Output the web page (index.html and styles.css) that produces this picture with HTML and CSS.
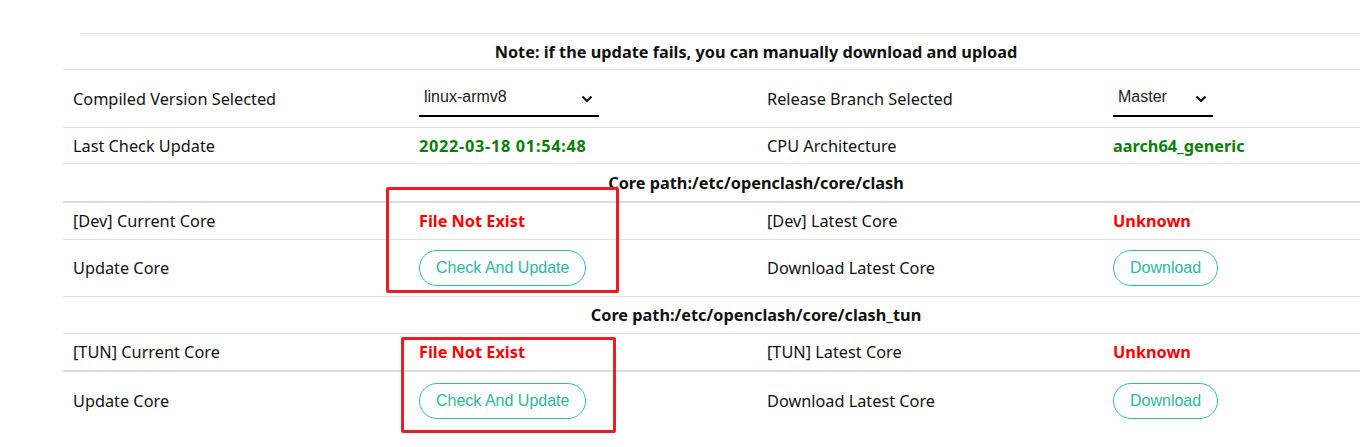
FILE: index.html
```html
<!DOCTYPE html>
<html lang="en">
<head>
<meta charset="utf-8">
<title>Core Update</title>
<link rel="stylesheet" href="styles.css">
</head>
<body>
<div class="page">
  <div class="top-rule"></div>
  <div class="table">
    <div class="row head h36">Note: if the update fails, you can manually download and upload</div>
    <div class="row h58">
      <div class="cell">Compiled Version Selected</div>
      <div class="cell">
        <div class="select w180"><span>linux-armv8</span><svg class="chev" viewBox="0 0 12 8" width="12" height="8"><path d="M1.5 1.5 L6 6 L10.5 1.5" fill="none" stroke="#111" stroke-width="2"/></svg></div>
      </div>
      <div class="cell">Release Branch Selected</div>
      <div class="cell">
        <div class="select w100"><span>Master</span><svg class="chev" viewBox="0 0 12 8" width="12" height="8"><path d="M1.5 1.5 L6 6 L10.5 1.5" fill="none" stroke="#111" stroke-width="2"/></svg></div>
      </div>
    </div>
    <div class="row h36">
      <div class="cell">Last Check Update</div>
      <div class="cell ok num">2022-03-18 01:54:48</div>
      <div class="cell">CPU Architecture</div>
      <div class="cell ok">aarch64_generic</div>
    </div>
    <div class="row head h39 thick">Core path:/etc/openclash/core/clash</div>
    <div class="row h37">
      <div class="cell">[Dev] Current Core</div>
      <div class="cell bad">File Not Exist</div>
      <div class="cell">[Dev] Latest Core</div>
      <div class="cell bad">Unknown</div>
    </div>
    <div class="row h57">
      <div class="cell">Update Core</div>
      <div class="cell"><button class="btn">Check And Update</button></div>
      <div class="cell">Download Latest Core</div>
      <div class="cell"><button class="btn">Download</button></div>
    </div>
    <div class="row head h37">Core path:/etc/openclash/core/clash_tun</div>
    <div class="row h38 thick">
      <div class="cell">[TUN] Current Core</div>
      <div class="cell bad">File Not Exist</div>
      <div class="cell">[TUN] Latest Core</div>
      <div class="cell bad">Unknown</div>
    </div>
    <div class="row h57 noline">
      <div class="cell">Update Core</div>
      <div class="cell"><button class="btn">Check And Update</button></div>
      <div class="cell">Download Latest Core</div>
      <div class="cell"><button class="btn">Download</button></div>
    </div>
  </div>
  <div class="mark mark-1"></div>
  <div class="mark mark-2"></div>
</div>
</body>
</html>
```

FILE: styles.css
```css
html, body {
  margin: 0;
  padding: 0;
  background: #fff;
}
body {
  width: 1360px;
  height: 447px;
  overflow: hidden;
  font-family: "Noto Sans", "Open Sans", sans-serif;
  font-size: 16.3px;
  color: #111;
}
.page {
  position: relative;
  width: 1360px;
  height: 447px;
  overflow: hidden;
}
.top-rule {
  height: 34px;
  margin-left: 80px;
  box-sizing: border-box;
  border-bottom: 1px solid #e2e2e2;
}
.table {
  margin-left: 63px;
  width: 1386px;
}
.row {
  display: grid;
  grid-template-columns: 346px 348px 346px 346px;
  align-items: center;
  box-sizing: border-box;
  border-bottom: 1px solid #e2e2e2;
}
.row.thick { border-bottom-width: 2px; border-bottom-color: #dcdcdc; }
.row.noline { border-bottom: none; }
.row.head {
  display: flex;
  justify-content: center;
  align-items: center;
  font-weight: 700;
}
.h36 { height: 36px; }
.h37 { height: 37px; }
.h38 { height: 38px; }
.h39 { height: 39px; }
.h57 { height: 57px; }
.h58 { height: 58px; }
.cell {
  padding-left: 10px;
  white-space: nowrap;
}
.ok { color: #0a800a; font-weight: 700; }
.num { letter-spacing: 0.7px; }
.bad { color: #ff0000; font-weight: 700; }
.select {
  display: flex;
  align-items: center;
  justify-content: space-between;
  box-sizing: border-box;
  height: 36px;
  padding: 0 6px 0 5px;
  border-bottom: 2px solid #000;
  font-family: "Liberation Sans", Arial, sans-serif;
  font-size: 16px;
  color: #222;
  margin-top: 1px;
}
.select span { margin-top: -2px; }
.chev { display: block; margin-top: 2px; }
.w180 { width: 180px; }
.w100 { width: 100px; }
.btn {
  display: inline-block;
  box-sizing: border-box;
  height: 36px;
  padding: 0 16px;
  border: 1px solid #2fbfa6;
  border-radius: 18px;
  background: #fff;
  color: #2bb8a0;
  font-family: "Liberation Sans", Arial, sans-serif;
  font-size: 16px;
  line-height: 34px;
}
.mark {
  position: absolute;
  box-sizing: border-box;
  border: 3px solid #ec1c24;
  border-radius: 2px;
}
.mark-1 { left: 386px; top: 187px; width: 233px; height: 106px; }
.mark-2 { left: 401px; top: 337px; width: 215px; height: 96px; }
```
